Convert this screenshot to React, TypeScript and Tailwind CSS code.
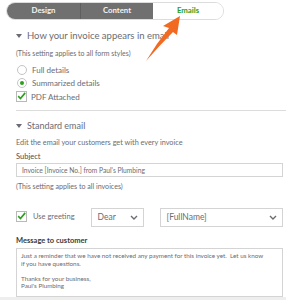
import React from "react";

function Tri() {
  return (
    <svg width="6" height="4" viewBox="0 0 6 4" className="shrink-0">
      <path d="M0 0 L6 0 L3 4 Z" fill="#6b6c72" />
    </svg>
  );
}

function Check() {
  return (
    <div className="w-[11px] h-[11px] border border-[#b9b9b9] bg-white flex items-center justify-center shrink-0">
      <svg width="11" height="10" viewBox="0 0 11 10" className="-mt-[1px]">
        <path d="M1.5 5.2 L4.2 8 L10 1.2" fill="none" stroke="#2ca01c" strokeWidth="2" />
      </svg>
    </div>
  );
}

function Chevron() {
  return (
    <svg width="8" height="5" viewBox="0 0 8 5">
      <path d="M1 1 L4 4 L7 1" fill="none" stroke="#6b6c72" strokeWidth="1.4" />
    </svg>
  );
}

export default function App() {
  return (
    <div className="relative w-[286px] h-[300px] overflow-hidden bg-white font-['Lato',sans-serif] text-[#6b6c72]">
      {/* tabs */}
      <div className="mt-[2px] ml-[6px] w-[218px] h-[18px] flex rounded-full overflow-hidden border border-[#dcdcdc]">
        <div className="w-[73px] bg-[#707070] text-[#f2f2f2] text-[7.8px] font-bold flex items-center justify-center">Design</div>
        <div className="w-[73px] bg-[#707070] border-l border-[#5f5f5f] text-[#f2f2f2] text-[7.8px] font-bold flex items-center justify-center">Content</div>
        <div className="flex-1 bg-white text-[#2ca01c] text-[7.8px] font-bold flex items-center justify-center">Emails</div>
      </div>

      <div className="pl-[16px] pr-[3px]">
        <div className="mt-[9px] h-[14px] flex items-center gap-[5px] text-[9.5px]">
          <Tri />
          <span>How your invoice appears in email</span>
        </div>
        <div className="mt-[4px] h-[12px] flex items-center text-[7px]">(This setting applies to all form styles)</div>

        <div className="mt-[4px] h-[13px] flex items-center gap-[5px] text-[8px]">
          <div className="w-[10px] h-[10px] rounded-full border border-[#c4c4c4] ml-[1px]" />
          <span>Full details</span>
        </div>
        <div className="h-[14px] flex items-center gap-[5px] text-[8px]">
          <div className="w-[10px] h-[10px] rounded-full border border-[#c4c4c4] ml-[1px] flex items-center justify-center">
            <div className="w-[4px] h-[4px] rounded-full bg-[#2ca01c]" />
          </div>
          <span>Summarized details</span>
        </div>
        <div className="h-[13px] flex items-center gap-[4px] text-[8px]">
          <Check />
          <span>PDF Attached</span>
        </div>

        <div className="mt-[7px] border-t border-[#dcdcdc] -mr-[3px]" />

        <div className="mt-[8px] h-[14px] flex items-center gap-[5px] text-[9px]">
          <Tri />
          <span>Standard email</span>
        </div>
        <div className="mt-[4px] h-[12px] flex items-center text-[7.3px]">Edit the email your customers get with every invoice</div>
        <div className="mt-[3px] h-[10px] flex items-center text-[7.5px] text-[#4a4b50]">Subject</div>
        <div className="mt-[1px] h-[14px] border border-[#d4d4d4] flex items-center pl-[5px] text-[6.7px]">
          Invoice [Invoice No.] from Paul's Plumbing
        </div>
        <div className="mt-[5px] h-[10px] flex items-center text-[7.1px]">(This setting applies to all invoices)</div>

        <div className="mt-[16px] h-[19px] flex items-center">
          <div className="flex items-center gap-[6px] self-start mt-[3px]">
            <Check />
            <span className="text-[7.5px]">Use greeting</span>
          </div>
          <div className="ml-[16px] w-[53px] h-[19px] border border-[#d4d4d4] flex items-center justify-between pl-[6px] pr-[5px] text-[8.5px]">
            <span>Dear</span>
            <Chevron />
          </div>
          <div className="ml-[16px] flex-1 h-[19px] border border-[#d4d4d4] flex items-center justify-between pl-[6px] pr-[5px] text-[8.5px]">
            <span>[FullName]</span>
            <Chevron />
          </div>
        </div>

        <div className="mt-[9px] h-[10px] flex items-center text-[7.5px] font-bold text-[#393a3d]">Message to customer</div>
        <div className="mt-[2px] h-[49px] border border-[#d4d4d4] pl-[4px] pt-[3px] text-[6.3px] leading-[7.5px]">
          <div>Just a reminder that we have not received any payment for this invoice yet.&nbsp; Let us know</div>
          <div>if you have questions.</div>
          <div className="h-[7.5px]" />
          <div>Thanks for your business,</div>
          <div>Paul's Plumbing</div>
        </div>
      </div>
      <div className="h-[4px] bg-[#eeeeee]" />

      {/* arrow */}
      <svg className="absolute left-0 top-0 pointer-events-none" width="286" height="300" viewBox="0 0 286 300">
        <path d="M180 16 L163 26 L169 28 Q156 44 146 61 Q159 46 173 32 L177 35 Z" fill="#f26a21" />
      </svg>
    </div>
  );
}
